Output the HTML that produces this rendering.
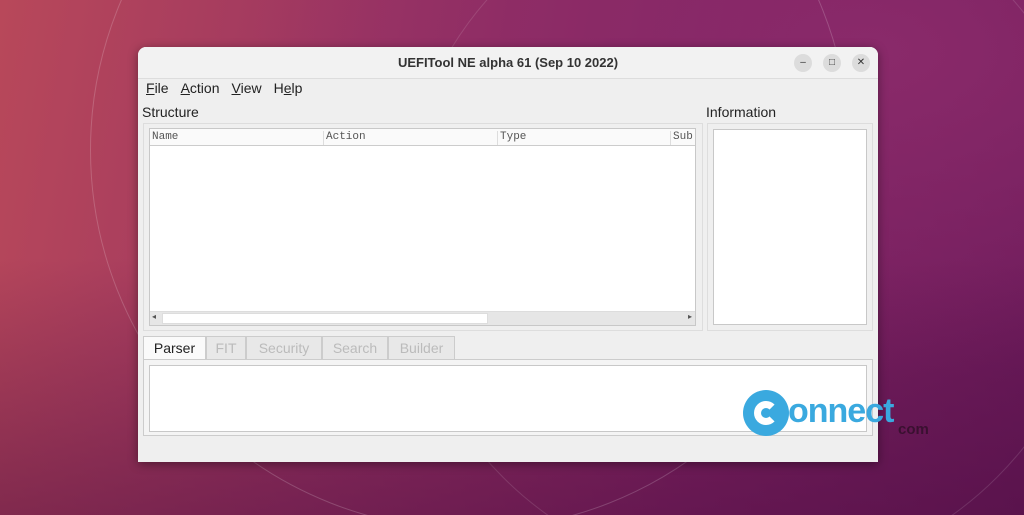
<!DOCTYPE html>
<html><head><style>
*{margin:0;padding:0;box-sizing:border-box}
html,body{width:1024px;height:515px;overflow:hidden;background:#7e2262}
body{position:relative;font-family:"Liberation Sans","DejaVu Sans",sans-serif}
.wrap{position:absolute;left:0;top:0;width:1024px;height:515px;overflow:hidden}
.bg{position:absolute;inset:0;background:radial-gradient(ellipse at 85% 10%,#8a2a6a 0%,transparent 50%),linear-gradient(100deg,#b8485a 0%,#9a3462 35%,#7e2262 70%,#6a1a5a 100%)}
.bg2{position:absolute;inset:0;background:linear-gradient(180deg,transparent 50%,rgba(70,10,60,.45) 100%)}
.ring{position:absolute;border:1px solid rgba(255,255,255,.18);border-radius:50%}
.win{position:absolute;left:138px;top:47px;width:740px;height:415px;background:#efefef;border-radius:8px 8px 0 0;box-shadow:0 2px 10px rgba(0,0,0,.4)}
.title{height:32px;text-align:center;font-weight:bold;font-size:13px;line-height:32px;color:#333;border-bottom:1px solid #ddd;background:#f2f2f2;border-radius:8px 8px 0 0}
.btn{position:absolute;top:7px;width:18px;height:18px;border-radius:50%;background:#dcdcdc;font-size:10px;text-align:center;line-height:18px;color:#333}
.menu{position:absolute;top:33px;left:8px;font-size:14px;color:#222}
.menu span{margin-right:12px}
.lbl{position:absolute;font-size:14px;color:#222}
.box{position:absolute;border:1px solid #c8c8c8;background:#fff}
.hdr{position:absolute;left:0;right:0;top:0;height:17px;border-bottom:1px solid #ccc;background:#fafafa;font-family:"Liberation Mono",monospace;font-size:11px;color:#555}
.hdr span{position:absolute;top:2px;padding-left:2px;border-left:1px solid #ddd;height:14px}
.tab{position:absolute;top:289px;height:23px;font-size:14px;color:#bbb;border:1px solid #ccc;border-bottom:none;background:#e8e8e8;text-align:center;line-height:22px}
</style></head><body>
<div class="wrap">
<div class="bg"></div>
<div class="bg2"></div>
<div class="ring" style="left:90px;top:-230px;width:760px;height:760px"></div>
<div class="ring" style="left:400px;top:-120px;width:700px;height:700px;border-color:rgba(255,255,255,.12)"></div>
<div class="win">
<div class="title">UEFITool NE alpha 61 (Sep 10 2022)</div>
<div class="btn" style="left:656px">–</div><div class="btn" style="left:685px">□</div><div class="btn" style="left:714px">✕</div>
<div class="menu"><span><u>F</u>ile</span><span><u>A</u>ction</span><span><u>V</u>iew</span><span>H<u>e</u>lp</span></div>
<div class="lbl" style="left:4px;top:57px">Structure</div>
<div class="lbl" style="left:568px;top:57px">Information</div>
<div style="position:absolute;left:5px;top:76px;width:560px;height:208px;border:1px solid #ddd"></div>
<div class="box" style="left:11px;top:81px;width:547px;height:198px">
<div class="hdr"><span style="left:0;border:none">Name</span><span style="left:173px">Action</span><span style="left:347px">Type</span><span style="left:520px">Sub</span></div>
<div style="position:absolute;left:0;right:0;bottom:0;height:14px;background:#e6e6e6;border-top:1px solid #ddd">
<div style="position:absolute;left:12px;width:326px;top:1px;height:11px;background:#fff;border:1px solid #ddd"></div>
<span style="position:absolute;left:2px;top:0;font-size:8px;color:#555">◂</span><span style="position:absolute;right:3px;top:0;font-size:8px;color:#555">▸</span></div>
</div>
<div style="position:absolute;left:569px;top:76px;width:166px;height:208px;border:1px solid #ddd"></div>
<div class="box" style="left:575px;top:82px;width:154px;height:196px"></div>
<div class="tab" style="left:5px;width:63px;background:#fafafa;color:#222;height:24px">Parser</div>
<div class="tab" style="left:68px;width:40px">FIT</div>
<div class="tab" style="left:108px;width:76px">Security</div>
<div class="tab" style="left:184px;width:66px">Search</div>
<div class="tab" style="left:250px;width:67px">Builder</div>
<div style="position:absolute;left:5px;top:312px;width:730px;height:77px;border:1px solid #ccc;background:#f4f4f4"></div>
<div class="box" style="left:11px;top:318px;width:718px;height:67px"></div>
</div>
<div style="position:absolute;left:743px;top:390px;width:46px;height:46px;border-radius:50%;background:#3aa9df"></div>
<div style="position:absolute;left:754px;top:401px;width:24px;height:24px;border-radius:50%;border:7px solid #fff;border-right-color:transparent"></div>
<div style="position:absolute;left:788px;top:392px;font:bold 34px 'Liberation Sans',sans-serif;color:#3aa9df;letter-spacing:-1px">onnect</div>
<div style="position:absolute;left:898px;top:421px;font:bold 15px 'Liberation Sans',sans-serif;color:#3a1030">com</div>
</div>
</body></html>
